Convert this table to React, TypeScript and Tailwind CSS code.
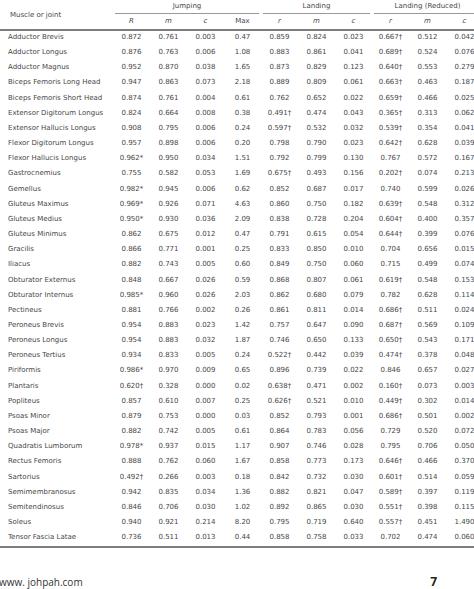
const rows: string[][] = [
  ["Adductor Brevis", "0.872", "0.761", "0.003", "0.47", "0.859", "0.824", "0.023", "0.667†", "0.512", "0.042"],
  ["Adductor Longus", "0.876", "0.763", "0.006", "1.08", "0.883", "0.861", "0.041", "0.689†", "0.524", "0.076"],
  ["Adductor Magnus", "0.952", "0.870", "0.038", "1.65", "0.873", "0.829", "0.123", "0.640†", "0.553", "0.279"],
  ["Biceps Femoris Long Head", "0.947", "0.863", "0.073", "2.18", "0.889", "0.809", "0.061", "0.663†", "0.463", "0.187"],
  ["Biceps Femoris Short Head", "0.874", "0.761", "0.004", "0.61", "0.762", "0.652", "0.022", "0.659†", "0.466", "0.025"],
  ["Extensor Digitorum Longus", "0.824", "0.664", "0.008", "0.38", "0.491†", "0.474", "0.043", "0.365†", "0.313", "0.062"],
  ["Extensor Hallucis Longus", "0.908", "0.795", "0.006", "0.24", "0.597†", "0.532", "0.032", "0.539†", "0.354", "0.041"],
  ["Flexor Digitorum Longus", "0.957", "0.898", "0.006", "0.20", "0.798", "0.790", "0.023", "0.642†", "0.628", "0.039"],
  ["Flexor Hallucis Longus", "0.962*", "0.950", "0.034", "1.51", "0.792", "0.799", "0.130", "0.767", "0.572", "0.167"],
  ["Gastrocnemius", "0.755", "0.582", "0.053", "1.69", "0.675†", "0.493", "0.156", "0.202†", "0.074", "0.213"],
  ["Gemellus", "0.982*", "0.945", "0.006", "0.62", "0.852", "0.687", "0.017", "0.740", "0.599", "0.026"],
  ["Gluteus Maximus", "0.969*", "0.926", "0.071", "4.63", "0.860", "0.750", "0.182", "0.639†", "0.548", "0.312"],
  ["Gluteus Medius", "0.950*", "0.930", "0.036", "2.09", "0.838", "0.728", "0.204", "0.604†", "0.400", "0.357"],
  ["Gluteus Minimus", "0.862", "0.675", "0.012", "0.47", "0.791", "0.615", "0.054", "0.644†", "0.399", "0.076"],
  ["Gracilis", "0.866", "0.771", "0.001", "0.25", "0.833", "0.850", "0.010", "0.704", "0.656", "0.015"],
  ["Iliacus", "0.882", "0.743", "0.005", "0.60", "0.849", "0.750", "0.060", "0.715", "0.499", "0.074"],
  ["Obturator Externus", "0.848", "0.667", "0.026", "0.59", "0.868", "0.807", "0.061", "0.619†", "0.548", "0.153"],
  ["Obturator Internus", "0.985*", "0.960", "0.026", "2.03", "0.862", "0.680", "0.079", "0.782", "0.628", "0.114"],
  ["Pectineus", "0.881", "0.766", "0.002", "0.26", "0.861", "0.811", "0.014", "0.686†", "0.511", "0.024"],
  ["Peroneus Brevis", "0.954", "0.883", "0.023", "1.42", "0.757", "0.647", "0.090", "0.687†", "0.569", "0.109"],
  ["Peroneus Longus", "0.954", "0.883", "0.032", "1.87", "0.746", "0.650", "0.133", "0.650†", "0.543", "0.171"],
  ["Peroneus Tertius", "0.934", "0.833", "0.005", "0.24", "0.522†", "0.442", "0.039", "0.474†", "0.378", "0.048"],
  ["Piriformis", "0.986*", "0.970", "0.009", "0.65", "0.896", "0.739", "0.022", "0.846", "0.657", "0.027"],
  ["Plantaris", "0.620†", "0.328", "0.000", "0.02", "0.638†", "0.471", "0.002", "0.160†", "0.073", "0.003"],
  ["Popliteus", "0.857", "0.610", "0.007", "0.25", "0.626†", "0.521", "0.010", "0.449†", "0.302", "0.014"],
  ["Psoas Minor", "0.879", "0.753", "0.000", "0.03", "0.852", "0.793", "0.001", "0.686†", "0.501", "0.002"],
  ["Psoas Major", "0.882", "0.742", "0.005", "0.61", "0.864", "0.783", "0.056", "0.729", "0.520", "0.072"],
  ["Quadratis Lumborum", "0.978*", "0.937", "0.015", "1.17", "0.907", "0.746", "0.028", "0.795", "0.706", "0.050"],
  ["Rectus Femoris", "0.888", "0.762", "0.060", "1.67", "0.858", "0.773", "0.173", "0.646†", "0.466", "0.370"],
  ["Sartorius", "0.492†", "0.266", "0.003", "0.18", "0.842", "0.732", "0.030", "0.601†", "0.514", "0.059"],
  ["Semimembranosus", "0.942", "0.835", "0.034", "1.36", "0.882", "0.821", "0.047", "0.589†", "0.397", "0.119"],
  ["Semitendinosus", "0.846", "0.706", "0.030", "1.02", "0.892", "0.865", "0.030", "0.551†", "0.398", "0.115"],
  ["Soleus", "0.940", "0.921", "0.214", "8.20", "0.795", "0.719", "0.640", "0.557†", "0.451", "1.490"],
  ["Tensor Fascia Latae", "0.736", "0.511", "0.013", "0.44", "0.858", "0.758", "0.033", "0.702", "0.474", "0.060"],
]

const subheads = [
  { label: "R", italic: true },
  { label: "m", italic: true },
  { label: "c", italic: true },
  { label: "Max", italic: false },
  { label: "r", italic: true },
  { label: "m", italic: true },
  { label: "c", italic: true },
  { label: "r", italic: true },
  { label: "m", italic: true },
  { label: "c", italic: true },
]

const groups = [
  { label: "Jumping", width: "w-[148px]" },
  { label: "Landing", width: "w-[111px]" },
  { label: "Landing (Reduced)", width: "w-[111px]" },
]

export default function App() {
  return (
    <div className="w-[474px] h-[589px] overflow-hidden bg-white text-[#474747] font-['DejaVu_Sans',sans-serif]">
      <div className="w-[486px] text-[7px]">
        {/* header */}
        <div className="flex h-[29px]">
          <div className="w-[113px] shrink-0 flex items-center pl-[10px] pt-[1px]">Muscle or joint</div>
          <div className="flex flex-col">
            <div className="flex h-[14px]">
              {groups.map((g) => (
                <div key={g.label} className={`${g.width} shrink-0 px-[2px]`}>
                  <div className="h-full border-b border-[#9a9a9a] text-center leading-[12px]">{g.label}</div>
                </div>
              ))}
            </div>
            <div className="flex h-[15px]">
              {subheads.map((s, i) => (
                <div
                  key={i}
                  className={`w-[37px] shrink-0 text-center leading-[15px] ${s.italic ? "italic" : ""}`}
                >
                  {s.label}
                </div>
              ))}
            </div>
          </div>
        </div>
        <div className="h-[2px] bg-[#7d7d7d]" />

        {/* body */}
        <div className="flex flex-col">
          {rows.map((row) => (
            <div key={row[0]} className="flex h-[15.17px] leading-[13px]">
              <div className="w-[113px] shrink-0 pl-[8px] whitespace-nowrap">{row[0]}</div>
              {row.slice(1).map((v, i) => (
                <div key={i} className="w-[37px] shrink-0 text-center whitespace-nowrap">
                  {v}
                </div>
              ))}
            </div>
          ))}
        </div>
        <div className="h-[2px] bg-[#7d7d7d]" />
      </div>

      {/* footer */}
      <div className="flex items-center justify-between pt-[27px] pr-[37px] leading-[14px]">
        <span className="text-[10px] text-[#333] font-['Open_Sans',sans-serif] -ml-[1px]">www. johpah.com</span>
        <span className="text-[12px] font-bold text-[#222] font-['Open_Sans',sans-serif]">7</span>
      </div>
    </div>
  )
}
